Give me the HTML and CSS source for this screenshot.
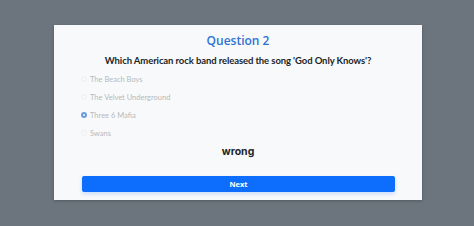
FILE: index.html
```html
<!DOCTYPE html>
<html>
<head>
<meta charset="utf-8">
<link rel="stylesheet" href="styles.css">
</head>
<body>
<div class="card">
  <h1 class="title">Question 2</h1>
  <p class="question">Which American rock band released the song 'God Only Knows'?</p>
  <div class="options">
    <label class="option"><span class="radio"></span>The Beach Boys</label>
    <label class="option"><span class="radio"></span>The Velvet Underground</label>
    <label class="option"><span class="radio checked"></span>Three 6 Mafia</label>
    <label class="option"><span class="radio"></span>Swans</label>
  </div>
  <div class="result">wrong</div>
  <button class="next">Next</button>
</div>
</body>
</html>
```
FILE: styles.css
```css
html, body {
  margin: 0;
  padding: 0;
}
body {
  background: #6c757d;
  width: 474px;
  height: 226px;
  font-family: "Lato", "Open Sans", sans-serif;
  padding-top: 25px;
  box-sizing: border-box;
}
.card {
  margin-left: 54px;
  width: 368px;
  height: 175px;
  background: #f8f9fa;
  box-sizing: border-box;
  padding: 7px 27px 0 27px;
  display: flex;
  flex-direction: column;
  box-shadow: 0 1px 3px rgba(0,0,0,0.25);
}
.title {
  margin: 0;
  text-align: center;
  font-family: "Open Sans", "Noto Sans", sans-serif;
  font-size: 12px;
  font-weight: 600;
  color: #2f72d6;
  line-height: 18px;
}
.question {
  margin: 3px 0 0;
  text-align: center;
  font-size: 9.5px;
  font-weight: 700;
  letter-spacing: -0.1px;
  color: #212529;
  line-height: 16px;
  white-space: nowrap;
}
.options {
  display: flex;
  flex-direction: column;
  gap: 3px;
  margin-top: 2.5px;
}
.option {
  display: flex;
  align-items: center;
  height: 15px;
  font-size: 7.5px;
  color: #b6babe;
}
.radio {
  width: 6px;
  height: 6px;
  border-radius: 50%;
  box-sizing: border-box;
  border: 1px solid #eef0f2;
  background: #f8f9fa;
  margin-right: 3px;
}
.radio.checked {
  border: 2px solid #6d9be0;
  background: #f8f9fa;
}
.result {
  text-align: center;
  font-family: "Inter", "Noto Sans", sans-serif;
  font-size: 10.5px;
  font-weight: 700;
  color: #212529;
  margin-top: 3.5px;
  line-height: 16px;
}
.next {
  margin-top: 16px;
  margin-left: 1px;
  width: 313px;
  height: 16px;
  border: none;
  border-radius: 2px;
  background: #0d6efd;
  color: #fff;
  font-family: "Open Sans", "Noto Sans", sans-serif;
  font-size: 7.5px;
  font-weight: 700;
  padding: 0;
  box-shadow: 0 2px 4px rgba(13,110,253,0.2);
}
```
